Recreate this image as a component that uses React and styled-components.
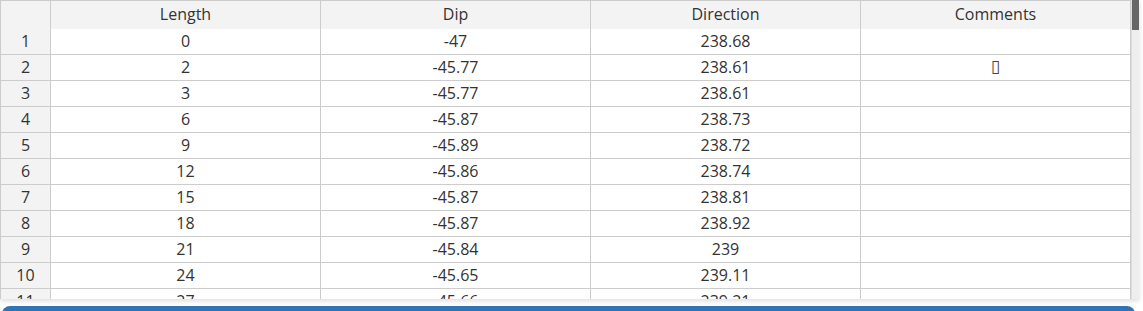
import React from 'react';
import styled, { createGlobalStyle } from 'styled-components';

const GlobalStyle = createGlobalStyle`
  html, body {
    margin: 0;
    padding: 0;
    background: #fff;
    overflow: hidden;
  }
  body {
    font-family: "Open Sans", "Noto Sans", sans-serif;
  }
`;

const rows = [
  [0, -47, 238.68, ''],
  [2, -45.77, 238.61, '\u25AF'],
  [3, -45.77, 238.61, ''],
  [6, -45.87, 238.73, ''],
  [9, -45.89, 238.72, ''],
  [12, -45.86, 238.74, ''],
  [15, -45.87, 238.81, ''],
  [18, -45.87, 238.92, ''],
  [21, -45.84, 239, ''],
  [24, -45.65, 239.11, ''],
  [27, -45.66, 239.21, ''],
  [30, -45.6, 239.3, ''],
];

const headers = ['Length', 'Dip', 'Direction', 'Comments'];

const Page = styled.div`
  width: 1143px;
  height: 311px;
  overflow: hidden;
`;

const Holder = styled.div`
  display: flex;
  width: 1139px;
  height: 299px;
  overflow: hidden;
  box-shadow: 0 2px 5px rgba(0, 0, 0, 0.14);
`;

const Grid = styled.div`
  display: grid;
  grid-template-columns: 50px repeat(4, 270px);
  grid-template-rows: 28px;
  grid-auto-rows: 26px;
  border-left: 1px solid #ccc;
  border-top: 1px solid #ccc;
  align-self: flex-start;
  font-size: 16px;
  color: #333;
`;

const Cell = styled.div`
  display: flex;
  align-items: center;
  justify-content: center;
  padding-bottom: 2px;
  border-right: 1px solid #ccc;
  border-bottom: ${({ head }) => (head ? 'none' : '1px solid #ccc')};
  background: ${({ shade }) => (shade ? '#f3f3f3' : '#fff')};
  white-space: nowrap;
  overflow: hidden;
  line-height: 1;
`;

const Glyph = styled.span`
  font-family: "DejaVu Sans", sans-serif;
  font-size: 17px;
  color: #444;
`;

const Track = styled.div`
  width: 8px;
  background: #eee;
  border-left: 1px solid #ddd;
  flex-shrink: 0;
`;

const Thumb = styled.div`
  width: 8px;
  height: 30px;
  background: #666;
`;

const BlueBar = styled.div`
  margin: 7px 0 0 2px;
  width: 1133px;
  height: 20px;
  background: #3273b6;
  border-radius: 8px 8px 0 0;
`;

export default function App() {
  return (
    <Page>
      <GlobalStyle />
      <Holder>
        <Grid>
          <Cell shade head />
          {headers.map((h) => (
            <Cell key={h} shade head>{h}</Cell>
          ))}
          {rows.map((r, i) => (
            <React.Fragment key={i}>
              <Cell shade>{i + 1}</Cell>
              <Cell>{r[0]}</Cell>
              <Cell>{r[1]}</Cell>
              <Cell>{r[2]}</Cell>
              <Cell>{r[3] ? <Glyph>{r[3]}</Glyph> : null}</Cell>
            </React.Fragment>
          ))}
        </Grid>
        <Track>
          <Thumb />
        </Track>
      </Holder>
      <BlueBar />
    </Page>
  );
}
